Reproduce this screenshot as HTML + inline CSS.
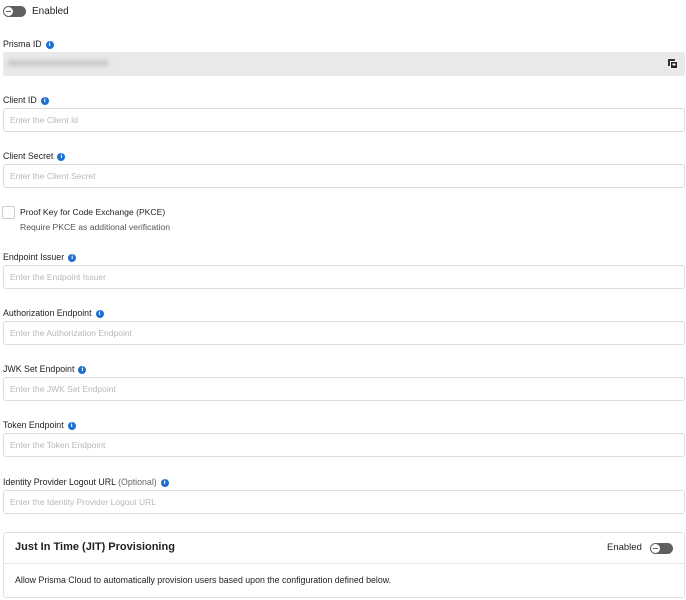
<!DOCTYPE html>
<html><head><style>
body{margin:0;width:686px;height:600px;background:#fff;font-family:"Liberation Sans",sans-serif;color:#222;position:relative;overflow:hidden}
.a{position:absolute}
.lbl{position:absolute;left:3px;font-size:8.8px;color:#222;white-space:nowrap}
.i{display:inline-block;width:8px;height:8px;border-radius:50%;background:#1f6fd1;color:#fff;font-size:6.5px;font-weight:bold;text-align:center;line-height:8px;vertical-align:1px;margin-left:4px;font-family:"Liberation Serif",serif}
.in{position:absolute;left:3px;width:682px;height:24px;border:1px solid #dcdcdc;border-radius:3px;box-sizing:border-box;font-size:8.5px;color:#b8b8b8;padding-left:6px;line-height:23px}
.tg{position:absolute;width:23px;height:11px;border-radius:6px;background:#5f5f5f}
.tg::before{content:"";position:absolute;left:1px;top:1px;width:9px;height:9px;border-radius:50%;background:#fff}
.tg::after{content:"";position:absolute;left:3px;top:5px;width:5px;height:1.3px;background:#5f5f5f}
</style></head><body>
<div class="tg" style="left:3px;top:6px"></div>
<div class="a" style="left:32px;top:6px;font-size:10px">Enabled</div>

<div class="lbl" style="top:39px">Prisma ID<span class="i">i</span></div>
<div class="a" style="left:3px;top:52px;width:682px;height:24px;background:#e8e9e9;border-radius:3px"></div>
<div class="a" style="left:8px;top:60px;width:100px;height:6px;background:#c8c8c8;filter:blur(2px)"></div>
<svg class="a" style="left:667px;top:58px" width="12" height="12" viewBox="0 0 12 12"><rect x="1" y="1" width="7" height="7" fill="#333"/><rect x="3" y="3" width="7.5" height="7.5" fill="#fff"/><rect x="4" y="4" width="6" height="6" fill="#222"/><rect x="5.5" y="5.5" width="3" height="2" fill="#fff"/></svg>

<div class="lbl" style="top:95px">Client ID<span class="i">i</span></div>
<div class="in" style="top:108px">Enter the Client Id</div>
<div class="lbl" style="top:151px">Client Secret<span class="i">i</span></div>
<div class="in" style="top:164px">Enter the Client Secret</div>

<div class="a" style="left:2px;top:206px;width:11px;height:11px;border:1px solid #ccc;border-radius:2px"></div>
<div class="a" style="left:20px;top:207px;font-size:8.6px">Proof Key for Code Exchange (PKCE)</div>
<div class="a" style="left:20px;top:222px;font-size:8.6px;color:#555">Require PKCE as additional verification</div>

<div class="lbl" style="top:252px">Endpoint Issuer<span class="i">i</span></div>
<div class="in" style="top:265px">Enter the Endpoint Issuer</div>
<div class="lbl" style="top:308px">Authorization Endpoint<span class="i">i</span></div>
<div class="in" style="top:321px">Enter the Authorization Endpoint</div>
<div class="lbl" style="top:364px">JWK Set Endpoint<span class="i">i</span></div>
<div class="in" style="top:377px">Enter the JWK Set Endpoint</div>
<div class="lbl" style="top:420px">Token Endpoint<span class="i">i</span></div>
<div class="in" style="top:433px">Enter the Token Endpoint</div>
<div class="lbl" style="top:477px">Identity Provider Logout URL <span style="color:#666">(Optional)</span><span class="i">i</span></div>
<div class="in" style="top:490px">Enter the Identity Provider Logout URL</div>

<div class="a" style="left:3px;top:532px;width:682px;height:66px;border:1px solid #e0e0e0;border-radius:3px;box-sizing:border-box"></div>
<div class="a" style="left:4px;top:563px;width:680px;height:1px;background:#e6e6e6"></div>
<div class="a" style="left:15px;top:541px;font-size:11px;font-weight:bold;color:#222">Just In Time (JIT) Provisioning</div>
<div class="a" style="left:607px;top:542px;font-size:9.5px">Enabled</div>
<div class="tg" style="left:650px;top:543px"></div>
<div class="a" style="left:15px;top:575px;font-size:8.8px">Allow Prisma Cloud to automatically provision users based upon the configuration defined below.</div>
</body></html>
